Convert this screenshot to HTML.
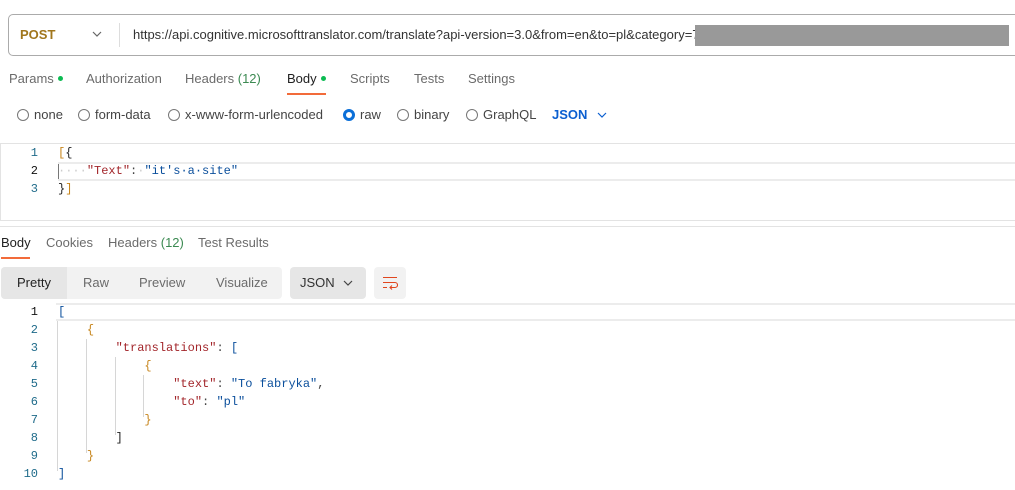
<!DOCTYPE html>
<html><head><meta charset="utf-8"><style>
*{margin:0;padding:0;box-sizing:border-box}
body{width:1015px;height:490px;overflow:hidden;background:#fff;font-family:"Liberation Sans",sans-serif;font-size:13px;color:#212121;position:relative}
.a{position:absolute;white-space:pre}
.mono{font-family:"Liberation Mono",monospace;font-size:12px}
.ln{position:absolute;width:38px;text-align:right;color:#1f6b8a;font-family:"Liberation Mono",monospace;font-size:12px}
.k{color:#a3262b}.s{color:#0b4f9c}.p{color:#444}.b{color:#c7851c}.dk{color:#222}
.radio{position:absolute;width:12px;height:12px;border:1px solid #777;border-radius:50%}
.tab{position:absolute;color:#6b6b6b}
.g{position:absolute;width:1px;background:#d6d6d6}
.dot{display:inline-block;width:5px;height:5px;border-radius:50%;background:#0cbb52;margin-left:4px;vertical-align:2px}
</style></head><body>
<div class="a" style="left:8px;top:14px;width:1020px;height:42px;border:1px solid #ababab;border-radius:5px"></div>
<div class="a" style="left:20px;top:27px;color:#a0761c;font-weight:bold;font-size:13px">POST</div>
<svg class="a" style="left:92px;top:31px" width="10" height="7"><path d="M1 1L5 5L9 1" fill="none" stroke="#666" stroke-width="1.2"/></svg>
<div class="a" style="left:119px;top:23px;width:1px;height:24px;background:#ddd"></div>
<div class="a" style="left:133px;top:27px;color:#333">https://api.cognitive.microsofttranslator.com/translate?api-version=3.0&amp;from=en&amp;to=pl&amp;category=7</div>
<div class="a" style="left:695px;top:25px;width:314px;height:21px;background:#999"></div>

<div class="tab" style="left:9px;top:71px">Params<span class="dot"></span></div>
<div class="tab" style="left:86px;top:71px">Authorization</div>
<div class="tab" style="left:185px;top:71px">Headers <span style="color:#3c8a52">(12)</span></div>
<div class="tab" style="left:287px;top:71px;color:#212121">Body<span class="dot"></span></div>
<div class="a" style="left:287px;top:93px;width:39px;height:2px;background:#f26b3a"></div>
<div class="tab" style="left:350px;top:71px">Scripts</div>
<div class="tab" style="left:414px;top:71px">Tests</div>
<div class="tab" style="left:468px;top:71px">Settings</div>

<div class="radio" style="left:17px;top:109px"></div><div class="a" style="left:34px;top:107px;color:#444">none</div>
<div class="radio" style="left:78px;top:109px"></div><div class="a" style="left:95px;top:107px;color:#444">form-data</div>
<div class="radio" style="left:168px;top:109px"></div><div class="a" style="left:185px;top:107px;color:#444">x-www-form-urlencoded</div>
<div class="radio" style="left:343px;top:109px;border:3px solid #0b6fd8"></div><div class="a" style="left:360px;top:107px;color:#444">raw</div>
<div class="radio" style="left:397px;top:109px"></div><div class="a" style="left:414px;top:107px;color:#444">binary</div>
<div class="radio" style="left:466px;top:109px"></div><div class="a" style="left:483px;top:107px;color:#444">GraphQL</div>
<div class="a" style="left:552px;top:107px;color:#0b5fd0;font-weight:bold">JSON</div>
<svg class="a" style="left:597px;top:112px" width="10" height="7"><path d="M1 1L5 5L9 1" fill="none" stroke="#0b5fd0" stroke-width="1.2"/></svg>

<div class="a" style="left:0;top:143px;width:1015px;height:78px;border-top:1px solid #e3e3e3;border-bottom:1px solid #e3e3e3;border-left:1px solid #e3e3e3"></div>
<div class="a" style="left:58px;top:162px;width:960px;height:19px;border-top:2px solid #ececec;border-bottom:2px solid #ececec"></div>
<div class="a" style="left:58px;top:164px;width:1px;height:15px;background:#777"></div>
<div class="ln" style="top:146px">1</div><div class="ln" style="top:164px;color:#111">2</div><div class="ln" style="top:182px">3</div>
<div class="a mono" style="left:58px;top:146px"><span class="b">[</span><span class="dk">{</span></div>
<div class="a mono" style="left:58px;top:164px"><span style="color:#ccc">····</span><span class="k">"Text"</span><span class="p">:</span><span style="color:#ccc">·</span><span class="s">"it's·a·site"</span></div>
<div class="a mono" style="left:58px;top:182px"><span class="dk">}</span><span class="b">]</span></div>
<div class="a" style="left:0;top:226px;width:1015px;height:1px;background:#e3e3e3"></div>

<div class="tab" style="left:1px;top:235px;color:#212121">Body</div>
<div class="a" style="left:1px;top:257px;width:29px;height:2px;background:#f26b3a"></div>
<div class="tab" style="left:46px;top:235px">Cookies</div>
<div class="tab" style="left:108px;top:235px">Headers <span style="color:#3c8a52">(12)</span></div>
<div class="tab" style="left:198px;top:235px">Test Results</div>

<div class="a" style="left:1px;top:267px;width:281px;height:32px;background:#f2f2f2;border-radius:4px"></div>
<div class="a" style="left:1px;top:267px;width:66px;height:32px;background:#e6e6e6;border-radius:4px 0 0 4px"></div>
<div class="a" style="left:17px;top:275px;color:#222">Pretty</div>
<div class="a" style="left:83px;top:275px;color:#6b6b6b">Raw</div>
<div class="a" style="left:139px;top:275px;color:#6b6b6b">Preview</div>
<div class="a" style="left:216px;top:275px;color:#6b6b6b">Visualize</div>
<div class="a" style="left:290px;top:267px;width:76px;height:32px;background:#e6e6e6;border-radius:4px"></div>
<div class="a" style="left:300px;top:275px;color:#333">JSON</div>
<svg class="a" style="left:343px;top:280px" width="10" height="7"><path d="M1 1L5 5L9 1" fill="none" stroke="#444" stroke-width="1.2"/></svg>
<div class="a" style="left:374px;top:267px;width:32px;height:32px;background:#f2f2f2;border-radius:4px"></div>
<svg class="a" style="left:382px;top:276px" width="16" height="14"><path d="M1 1.5H15M1 6.5H13a2.5 2.5 0 0 1 0 5H8M10 9.5L8 11.5 10 13.5M1 11.5H5" fill="none" stroke="#e0461f" stroke-width="1.1"/></svg>

<div class="a" style="left:56px;top:303px;width:960px;height:18px;border-top:2px solid #ececec;border-bottom:2px solid #ececec"></div>
<div class="g" style="left:57px;top:321px;height:150px"></div>
<div class="g" style="left:86px;top:339px;height:114px"></div>
<div class="g" style="left:115px;top:357px;height:78px"></div>
<div class="g" style="left:143px;top:375px;height:42px"></div>
<div class="ln" style="top:305px;color:#111">1</div><div class="ln" style="top:323px">2</div><div class="ln" style="top:341px">3</div><div class="ln" style="top:359px">4</div><div class="ln" style="top:377px">5</div><div class="ln" style="top:395px">6</div><div class="ln" style="top:413px">7</div><div class="ln" style="top:431px">8</div><div class="ln" style="top:449px">9</div><div class="ln" style="top:467px">10</div>
<div class="a mono" style="left:58px;top:305px"><span class="s">[</span></div>
<div class="a mono" style="left:58px;top:323px">    <span class="b">{</span></div>
<div class="a mono" style="left:58px;top:341px">        <span class="k">"translations"</span><span class="p">: </span><span class="s">[</span></div>
<div class="a mono" style="left:58px;top:359px">            <span class="b">{</span></div>
<div class="a mono" style="left:58px;top:377px">                <span class="k">"text"</span><span class="p">: </span><span class="s">"To fabryka"</span><span class="p">,</span></div>
<div class="a mono" style="left:58px;top:395px">                <span class="k">"to"</span><span class="p">: </span><span class="s">"pl"</span></div>
<div class="a mono" style="left:58px;top:413px">            <span class="b">}</span></div>
<div class="a mono" style="left:58px;top:431px">        <span class="dk">]</span></div>
<div class="a mono" style="left:58px;top:449px">    <span class="b">}</span></div>
<div class="a mono" style="left:58px;top:467px"><span class="s">]</span></div>
</body></html>
